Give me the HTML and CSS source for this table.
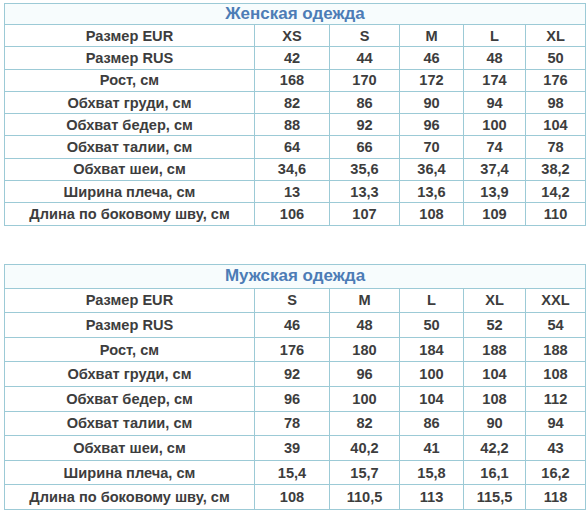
FILE: index.html
```html
<!DOCTYPE html>
<html lang="ru">
<head>
<meta charset="utf-8">
<link rel="stylesheet" href="styles.css">
</head>
<body>
<table class="sizes women">
  <colgroup><col class="c0"><col class="c1"><col class="c2"><col class="c3"><col class="c4"><col class="c5"></colgroup>
  <tr><th class="title" colspan="6">Женская одежда</th></tr>
  <tr><td>Размер EUR</td><td>XS</td><td>S</td><td>M</td><td>L</td><td>XL</td></tr>
  <tr><td>Размер RUS</td><td>42</td><td>44</td><td>46</td><td>48</td><td>50</td></tr>
  <tr><td>Рост, см</td><td>168</td><td>170</td><td>172</td><td>174</td><td>176</td></tr>
  <tr><td>Обхват груди, см</td><td>82</td><td>86</td><td>90</td><td>94</td><td>98</td></tr>
  <tr><td>Обхват бедер, см</td><td>88</td><td>92</td><td>96</td><td>100</td><td>104</td></tr>
  <tr><td>Обхват талии, см</td><td>64</td><td>66</td><td>70</td><td>74</td><td>78</td></tr>
  <tr><td>Обхват шеи, см</td><td>34,6</td><td>35,6</td><td>36,4</td><td>37,4</td><td>38,2</td></tr>
  <tr><td>Ширина плеча, см</td><td>13</td><td>13,3</td><td>13,6</td><td>13,9</td><td>14,2</td></tr>
  <tr><td>Длина по боковому шву, см</td><td>106</td><td>107</td><td>108</td><td>109</td><td>110</td></tr>
</table>
<table class="sizes men">
  <colgroup><col class="c0"><col class="c1"><col class="c2"><col class="c3"><col class="c4"><col class="c5"></colgroup>
  <tr><th class="title" colspan="6">Мужская одежда</th></tr>
  <tr><td>Размер EUR</td><td>S</td><td>M</td><td>L</td><td>XL</td><td>XXL</td></tr>
  <tr><td>Размер RUS</td><td>46</td><td>48</td><td>50</td><td>52</td><td>54</td></tr>
  <tr><td>Рост, см</td><td>176</td><td>180</td><td>184</td><td>188</td><td>188</td></tr>
  <tr><td>Обхват груди, см</td><td>92</td><td>96</td><td>100</td><td>104</td><td>108</td></tr>
  <tr><td>Обхват бедер, см</td><td>96</td><td>100</td><td>104</td><td>108</td><td>112</td></tr>
  <tr><td>Обхват талии, см</td><td>78</td><td>82</td><td>86</td><td>90</td><td>94</td></tr>
  <tr><td>Обхват шеи, см</td><td>39</td><td>40,2</td><td>41</td><td>42,2</td><td>43</td></tr>
  <tr><td>Ширина плеча, см</td><td>15,4</td><td>15,7</td><td>15,8</td><td>16,1</td><td>16,2</td></tr>
  <tr><td>Длина по боковому шву, см</td><td>108</td><td>110,5</td><td>113</td><td>115,5</td><td>118</td></tr>
</table>
</body>
</html>
```
FILE: styles.css
```css
html, body {
  margin: 0;
  padding: 0;
  background: #ffffff;
}
body {
  padding: 3px 0 0 4px;
  font-family: "Liberation Sans", Arial, sans-serif;
}
.sizes {
  border-collapse: collapse;
  table-layout: fixed;
  width: 581px;
  color: #3d3d3d;
  font-size: 14.6px;
  font-weight: bold;
}
.sizes td, .sizes th {
  border: 1px solid #9ccad6;
  padding: 0;
  text-align: center;
  vertical-align: middle;
  white-space: nowrap;
}
.sizes .title {
  color: #4d7cb6;
  font-size: 17px;
  background: #f7fcfd;
}
.c0 { width: 250px; }
.c1 { width: 75px; }
.c2 { width: 70px; }
.c3 { width: 64px; }
.c4 { width: 62px; }
.c5 { width: 60px; }
.women .title { height: 20px; }
.women td { height: 21.3px; }
.men { margin-top: 38px; }
.men .title { height: 23px; }
.men td { height: 23.6px; }
```
